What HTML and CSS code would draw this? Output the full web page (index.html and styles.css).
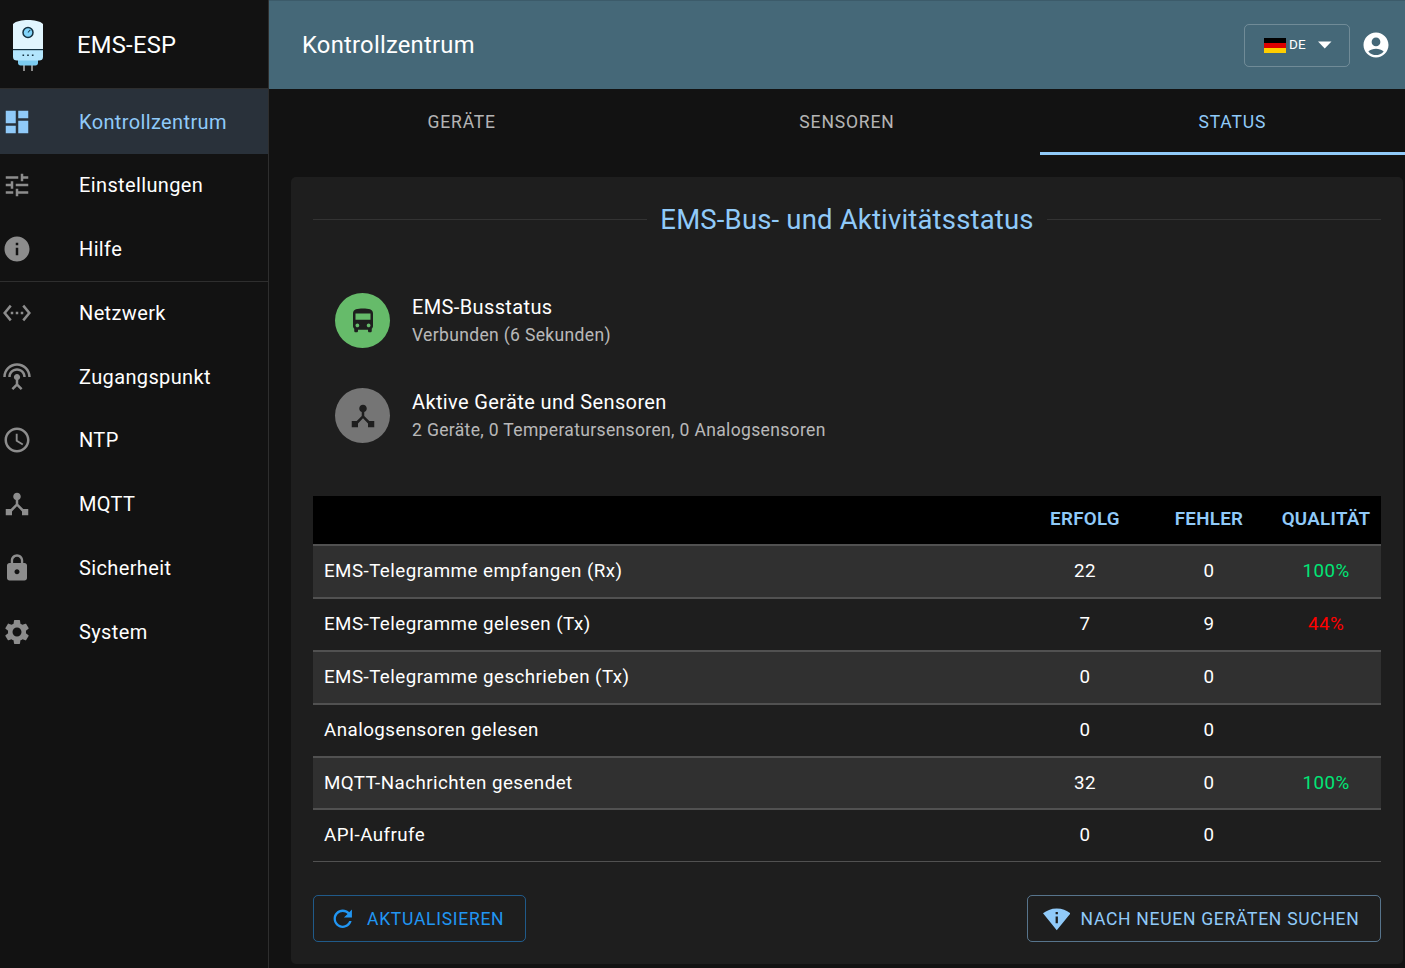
FILE: index.html
```html
<!DOCTYPE html>
<html lang="de">
<head>
<meta charset="utf-8">
<title>EMS-ESP</title>
<link rel="stylesheet" href="styles.css">
</head>
<body>
<aside class="sidebar">
  <div class="brand">
    <svg class="logo" viewBox="0 0 30 51">
      <path class="logo-leg" d="M10 44h2v7h-2zM18 44h2v7h-2z"/>
      <path class="logo-foot" d="M5 39h20v4c0 1.500-1 2.500-2.500 2.500h-15C6 45.500 5 44.500 5 43z"/>
      <path class="logo-band" d="M0 29h30v8c0 2.500-1.500 3.500-4 3.500H4c-2.500 0-4-1-4-3.500z"/>
      <path class="logo-body" d="M0 4C3 1 9 0 15 0s12 1 15 4v25H0z"/>
      <path class="logo-line" d="M0 29h30v1.200H0z"/>
      <circle class="logo-dial" cx="15" cy="12.500" r="5"/>
      <path class="logo-line" d="M14.600 12.200l2.400-2.600.6.6-2.400 2.600z"/>
      <path class="logo-line" d="M9.500 34.500h1.600v1.600H9.500zM14.200 34.500h1.600v1.600h-1.600zM18.900 34.500h1.600v1.600h-1.600z"/>
    </svg>
    <span class="brand-name">EMS-ESP</span>
  </div>
  <nav class="nav">
    <a class="nav-item active"><svg class="nav-icon" viewBox="0 0 24 24"><path d="M3 13h8V3H3v10zm0 8h8v-6H3v6zm10 0h8V11h-8v10zm0-18v6h8V3h-8z"/></svg><span>Kontrollzentrum</span></a>
    <a class="nav-item"><svg class="nav-icon" viewBox="0 0 24 24"><path d="M3 17v2h6v-2H3zM3 5v2h10V5H3zm10 16v-2h8v-2h-8v-2h-2v6h2zM7 9v2H3v2h4v2h2V9H7zm14 4v-2H11v2h10zm-6-4h2V7h4V5h-4V3h-2v6z"/></svg><span>Einstellungen</span></a>
    <a class="nav-item"><svg class="nav-icon" viewBox="0 0 24 24"><path d="M12 2C6.48 2 2 6.48 2 12s4.48 10 10 10 10-4.48 10-10S17.52 2 12 2zm1 15h-2v-6h2v6zm0-8h-2V7h2v2z"/></svg><span>Hilfe</span></a>
    <div class="nav-divider"></div>
    <a class="nav-item"><svg class="nav-icon" viewBox="0 0 24 24"><path d="M7.77 6.76 6.23 5.48.82 12l5.41 6.52 1.54-1.28L3.42 12l4.35-5.24zM7 13h2v-2H7v2zm10-2h-2v2h2v-2zm-6 2h2v-2h-2v2zm6.77-7.52-1.54 1.28L20.58 12l-4.35 5.24 1.54 1.28L23.18 12l-5.41-6.52z"/></svg><span>Netzwerk</span></a>
    <a class="nav-item"><svg class="nav-icon" viewBox="0 0 24 24"><path d="M12 5c-3.87 0-7 3.13-7 7h2c0-2.76 2.24-5 5-5s5 2.24 5 5h2c0-3.87-3.13-7-7-7zm1 9.29c.88-.39 1.5-1.26 1.5-2.29 0-1.38-1.12-2.5-2.5-2.5S9.5 10.62 9.5 12c0 1.02.62 1.9 1.5 2.29v3.3L7.59 21 9 22.41l3-3 3 3L16.41 21 13 17.59v-3.3zM12 1C5.93 1 1 5.93 1 12h2c0-4.97 4.03-9 9-9s9 4.03 9 9h2c0-6.07-4.93-11-11-11z"/></svg><span>Zugangspunkt</span></a>
    <a class="nav-item"><svg class="nav-icon" viewBox="0 0 24 24"><path d="M11.99 2C6.47 2 2 6.48 2 12s4.47 10 9.99 10C17.52 22 22 17.52 22 12S17.52 2 11.99 2zM12 20c-4.42 0-8-3.58-8-8s3.58-8 8-8 8 3.58 8 8-3.58 8-8 8zm.5-13H11v6l5.25 3.15.75-1.23-4.5-2.67z"/></svg><span>NTP</span></a>
    <a class="nav-item"><svg class="nav-icon" viewBox="0 0 24 24"><path d="M17 16l-4-4V8.82C14.16 8.4 15 7.3 15 6c0-1.66-1.34-3-3-3S9 4.34 9 6c0 1.3.84 2.4 2 2.82V12l-4 4H3v5h5v-3.05l4-4.2 4 4.2V21h5v-5h-4z"/></svg><span>MQTT</span></a>
    <a class="nav-item"><svg class="nav-icon" viewBox="0 0 24 24"><path d="M18 8h-1V6c0-2.76-2.24-5-5-5S7 3.24 7 6v2H6c-1.1 0-2 .9-2 2v10c0 1.1.9 2 2 2h12c1.1 0 2-.9 2-2V10c0-1.1-.9-2-2-2zm-6 9c-1.1 0-2-.9-2-2s.9-2 2-2 2 .9 2 2-.9 2-2 2zm3.1-9H8.9V6c0-1.71 1.39-3.1 3.1-3.1 1.71 0 3.1 1.39 3.1 3.1v2z"/></svg><span>Sicherheit</span></a>
    <a class="nav-item"><svg class="nav-icon" viewBox="0 0 24 24"><path d="M19.14 12.94c.04-.3.06-.61.06-.94 0-.32-.02-.64-.07-.94l2.03-1.58c.18-.14.23-.41.12-.61l-1.92-3.32c-.12-.22-.37-.29-.59-.22l-2.39.96c-.5-.38-1.03-.7-1.62-.94l-.36-2.54c-.04-.24-.24-.41-.48-.41h-3.84c-.24 0-.43.17-.47.41l-.36 2.54c-.59.24-1.13.57-1.62.94l-2.39-.96c-.22-.08-.47 0-.59.22L2.74 8.87c-.12.21-.08.47.12.61l2.03 1.58c-.05.3-.09.63-.09.94s.02.64.07.94l-2.03 1.58c-.18.14-.23.41-.12.61l1.92 3.32c.12.22.37.29.59.22l2.39-.96c.5.38 1.03.7 1.62.94l.36 2.54c.05.24.24.41.48.41h3.84c.24 0 .44-.17.47-.41l.36-2.54c.59-.24 1.13-.56 1.62-.94l2.39.96c.22.08.47 0 .59-.22l1.92-3.32c.12-.22.07-.47-.12-.61l-2.01-1.58zM12 15.6c-1.98 0-3.6-1.62-3.6-3.6s1.62-3.6 3.6-3.6 3.6 1.62 3.6 3.6-1.62 3.6-3.6 3.6z"/></svg><span>System</span></a>
  </nav>
</aside>
<main class="main">
  <header class="appbar">
    <h1 class="appbar-title">Kontrollzentrum</h1>
    <button class="lang">
      <svg class="flag" viewBox="0 0 22 15"><path fill="#000" d="M0 0h22v5H0z"/><path fill="#d00" d="M0 5h22v5H0z"/><path fill="#ffce00" d="M0 10h22v5H0z"/></svg>
      <span class="lang-code">DE</span>
      <svg class="caret" viewBox="0 0 14 8"><path d="M0 .5h13.500L6.750 7.500z"/></svg>
    </button>
    <svg class="account" viewBox="0 0 24 24"><path d="M12 2C6.48 2 2 6.48 2 12s4.48 10 10 10 10-4.48 10-10S17.52 2 12 2zm0 4c1.93 0 3.5 1.57 3.5 3.5S13.93 13 12 13s-3.5-1.57-3.5-3.5S10.07 6 12 6zm0 14c-2.03 0-4.43-.82-6.14-2.88C7.55 15.8 9.68 15 12 15s4.45.8 6.14 2.12C16.43 19.18 14.03 20 12 20z"/></svg>
  </header>
  <div class="tabs">
    <div class="tab">GERÄTE</div>
    <div class="tab">SENSOREN</div>
    <div class="tab tab-active">STATUS</div>
  </div>
  <section class="panel">
    <div class="panel-title"><h2>EMS-Bus- und Aktivitätsstatus</h2></div>
    <ul class="status-list">
      <li class="status-item">
        <span class="avatar avatar-green"><svg viewBox="0 0 24 24"><path d="M4 16c0 .88.39 1.67 1 2.22V20c0 .55.45 1 1 1h1c.55 0 1-.45 1-1v-1h8v1c0 .55.45 1 1 1h1c.55 0 1-.45 1-1v-1.780c.61-.55 1-1.340 1-2.220V6c0-3.500-3.580-4-8-4s-8 .5-8 4v10zm3.500 1c-.83 0-1.500-.67-1.500-1.500S6.670 14 7.500 14s1.500.67 1.500 1.500S8.330 17 7.500 17zm9 0c-.83 0-1.500-.67-1.500-1.500s.67-1.500 1.500-1.500 1.500.67 1.500 1.500-.67 1.500-1.500 1.500zm1.500-6H6V6h12v5z"/></svg></span>
        <div><div class="status-primary">EMS-Busstatus</div><div class="status-secondary">Verbunden (6 Sekunden)</div></div>
      </li>
      <li class="status-item">
        <span class="avatar avatar-gray"><svg viewBox="0 0 24 24"><path d="M17 16l-4-4V8.82C14.16 8.4 15 7.3 15 6c0-1.66-1.34-3-3-3S9 4.34 9 6c0 1.3.84 2.4 2 2.82V12l-4 4H3v5h5v-3.05l4-4.2 4 4.2V21h5v-5h-4z"/></svg></span>
        <div><div class="status-primary">Aktive Geräte und Sensoren</div><div class="status-secondary">2 Geräte, 0 Temperatursensoren, 0 Analogsensoren</div></div>
      </li>
    </ul>
    <div class="stats">
      <div class="stats-row stats-head"><div></div><div class="num">ERFOLG</div><div class="num">FEHLER</div><div class="num">QUALITÄT</div></div>
      <div class="stats-row odd"><div>EMS-Telegramme empfangen (Rx)</div><div class="num">22</div><div class="num">0</div><div class="num good">100%</div></div>
      <div class="stats-row"><div>EMS-Telegramme gelesen (Tx)</div><div class="num">7</div><div class="num">9</div><div class="num bad">44%</div></div>
      <div class="stats-row odd"><div>EMS-Telegramme geschrieben (Tx)</div><div class="num">0</div><div class="num">0</div><div></div></div>
      <div class="stats-row"><div>Analogsensoren gelesen</div><div class="num">0</div><div class="num">0</div><div></div></div>
      <div class="stats-row odd"><div>MQTT-Nachrichten gesendet</div><div class="num">32</div><div class="num">0</div><div class="num good">100%</div></div>
      <div class="stats-row"><div>API-Aufrufe</div><div class="num">0</div><div class="num">0</div><div></div></div>
    </div>
    <div class="actions">
      <button class="btn btn-refresh"><svg viewBox="0 0 24 24"><path d="M17.65 6.35C16.2 4.9 14.21 4 12 4c-4.42 0-7.99 3.58-7.99 8s3.57 8 7.99 8c3.73 0 6.84-2.55 7.73-6h-2.08c-.82 2.33-3.04 4-5.65 4-3.31 0-6-2.69-6-6s2.69-6 6-6c1.66 0 3.14.69 4.22 1.78L13 11h7V4l-2.35 2.35z"/></svg>AKTUALISIEREN</button>
      <button class="btn btn-scan"><svg viewBox="0 0 24 24"><path d="M12 3C6.95 3 3.15 4.85 0 7.23L12 22 24 7.25C20.85 4.87 17.05 3 12 3zm1 13h-2v-6h2v6zm-2-8V6h2v2h-2z"/></svg>NACH NEUEN GERÄTEN SUCHEN</button>
    </div>
  </section>
</main>
</body>
</html>
```

FILE: styles.css
```css
* { box-sizing: border-box; }
html, body { height: 100%; }
body {
  margin: 0;
  display: flex;
  overflow: hidden;
  background: #121212;
  color: #fff;
  font-family: Roboto, "Liberation Sans", sans-serif;
  font-size: 20px;
  letter-spacing: .37px;
}
.sidebar { flex: none; width: 269px; height: 968px; border-right: 1px solid #2e2e2e; }
.brand { height: 89px; display: flex; align-items: center; padding: 2px 0 0 13px; border-bottom: 1px solid #2e2e2e; }
.logo { width: 30px; height: 51px; flex: none; }
.logo-body { fill: #e1f5fe; }
.logo-band { fill: #b3e5fc; }
.logo-foot { fill: #7ccbf0; }
.logo-leg { fill: #8a8a8a; }
.logo-dial { fill: #81d4fa; stroke: #14303f; stroke-width: 1.500; }
.logo-line { fill: #14303f; }
.brand-name { margin-left: 34px; font-size: 23.750px; line-height: 30px; letter-spacing: .25px; }
.nav { display: flex; flex-direction: column; }
.nav-item { height: 63.750px; display: flex; align-items: center; flex: none; }
.nav-item.active { height: 64.570px; padding-top: 1px; background: #29313a; color: #90caf9; }
.nav-item.active .nav-icon { fill: #90caf9; }
.nav-icon { width: 30px; height: 30px; margin-left: 2px; margin-right: 47px; fill: #8d8d8d; flex: none; }
.nav-divider { height: 1px; background: #2e2e2e; margin-bottom: -1px; flex: none; }
.main { flex: none; width: 1136px; height: 968px; overflow: hidden; }
.appbar { height: 89px; display: flex; align-items: center; background: #456878; padding: 0 14px 0 33px; border-top: 1px solid #3c5b6a; }
.appbar-title { margin: 0 auto 0 0; font-size: 23.750px; font-weight: 400; line-height: 30px; letter-spacing: .25px; }
.lang {
  display: flex; align-items: center;
  width: 106px; height: 43px; margin-right: 11px; padding: 0 0 0 19px;
  background: transparent; color: #fff; border: 1px solid rgba(255,255,255,.23); border-radius: 5px;
  font: 400 13.500px Roboto, sans-serif;
  letter-spacing: .2px;
}
.flag { width: 22px; height: 15px; flex: none; }
.lang-code { margin: -2px 0 0 3px; }
.caret { width: 14px; height: 8px; margin-left: 12px; fill: #fff; }
.account { width: 30px; height: 30px; fill: #fff; flex: none; }
.tabs { width: 1156px; height: 66px; display: grid; grid-template-columns: repeat(3, 1fr); }
.tab { display: flex; align-items: center; justify-content: center; font-size: 17.500px; font-weight: 400; color: rgba(255,255,255,.7); letter-spacing: .85px; padding-top: 2.500px; border-bottom: 3px solid transparent; }
.tab-active { color: #90caf9; border-bottom-color: #90caf9; }
.panel { width: 1112px; height: 787px; margin: 22px 0 0 22px; padding: 22px; background: #1e1e1e; border-radius: 5px; }
.panel-title { display: flex; align-items: center; gap: 13px; height: 40px; }
.panel-title::before, .panel-title::after { content: ""; flex: 1; height: 1px; background: #333; }
.panel-title h2 { margin: 0; font-size: 27.500px; font-weight: 400; color: #90caf9; letter-spacing: .17px; }
.status-list { list-style: none; margin: 0; padding: 0 0 0 22px; }
.status-item { height: 95px; display: flex; align-items: center; gap: 22px; }
.status-item:first-child { margin-top: 34px; }
.avatar { width: 55px; height: 55px; border-radius: 50%; display: flex; align-items: center; justify-content: center; flex: none; }
.avatar svg { width: 30px; height: 30px; fill: #1e1e1e; }
.avatar-green { background: #66bb6a; }
.avatar-gray { background: #757575; }
.status-primary { font-size: 20px; line-height: 28px; }
.status-secondary { font-size: 17.500px; line-height: 26px; margin-top: .5px; color: rgba(255,255,255,.7); letter-spacing: .35px; }
.stats { margin-top: 33px; font-size: 18.750px; letter-spacing: .45px; }
.stats-row { display: grid; grid-template-columns: 699px 124px 124px 110px; align-items: center; height: 53px; padding: 0 0 1.500px 11px; border-bottom: 2px solid #515151; }
.stats-row:nth-last-child(-n+2) { height: 52px; padding-bottom: .75px; }
.stats-row:last-child { border-bottom-width: 1px; }
.stats-head { height: 50px; padding-bottom: 2px; background: #000; color: #90caf9; font-weight: 600; letter-spacing: .3px; }
.odd { background: #303030; }
.num { text-align: center; }
.good { color: #00e676; }
.bad { color: #f00; }
.actions { display: flex; justify-content: space-between; margin-top: 33px; }
.btn { display: flex; align-items: center; height: 47px; background: transparent; border-radius: 5px; font: 400 17.500px Roboto, sans-serif; letter-spacing: .72px; padding: 0 20.500px 0 15px; cursor: pointer; }
.btn svg { width: 27.500px; height: 27.500px; margin-right: 10.500px; flex: none; }
.btn-refresh { color: #2196f3; border: 1px solid rgba(33,150,243,.5); }
.btn-refresh svg { fill: #2196f3; }
.btn-scan { color: #90caf9; border: 1px solid rgba(144,202,249,.5); }
.btn-scan svg { fill: #90caf9; }
```
